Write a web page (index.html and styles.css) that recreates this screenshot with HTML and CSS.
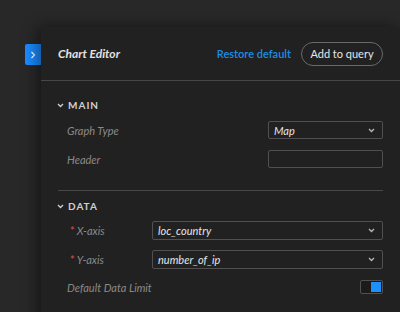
FILE: index.html
```html
<!DOCTYPE html>
<html>
<head>
<meta charset="utf-8">
<link rel="stylesheet" href="styles.css">
</head>
<body>
<div class="page">
  <div class="tab">
    <svg width="6" height="8" viewBox="0 0 6 8"><path d="M1.5 1 L4.5 4 L1.5 7" fill="none" stroke="#fff" stroke-width="1.2"/></svg>
  </div>
  <div class="panel">
    <div class="head">
      <div class="title">Chart Editor</div>
      <div class="restore">Restore default</div>
      <div class="add">Add to query</div>
    </div>
    <div class="body">
      <div class="sec sec-main">
        <div class="sec-head">
          <svg class="chev" width="7" height="5" viewBox="0 0 7 5"><path d="M1 1 L3.5 3.5 L6 1" fill="none" stroke="#cfcfcf" stroke-width="1.3"/></svg>
          <span>MAIN</span>
        </div>
        <div class="row row-main">
          <div class="label">Graph Type</div>
          <div class="select short"><span>Map</span><svg class="dd" width="7" height="5" viewBox="0 0 7 5"><path d="M1 1 L3.5 3.5 L6 1" fill="none" stroke="#b8b8b8" stroke-width="1.3"/></svg></div>
        </div>
        <div class="row row-main">
          <div class="label">Header</div>
          <div class="select short"></div>
        </div>
      </div>
      <div class="divider"></div>
      <div class="sec sec-data">
        <div class="sec-head">
          <svg class="chev" width="7" height="5" viewBox="0 0 7 5"><path d="M1 1 L3.5 3.5 L6 1" fill="none" stroke="#cfcfcf" stroke-width="1.3"/></svg>
          <span>DATA</span>
        </div>
        <div class="row row-data">
          <div class="label"><span class="req">*</span>X-axis</div>
          <div class="select long"><span>loc_country</span><svg class="dd" width="7" height="5" viewBox="0 0 7 5"><path d="M1 1 L3.5 3.5 L6 1" fill="none" stroke="#b8b8b8" stroke-width="1.3"/></svg></div>
        </div>
        <div class="row row-data">
          <div class="label"><span class="req">*</span>Y-axis</div>
          <div class="select long"><span>number_of_ip</span><svg class="dd" width="7" height="5" viewBox="0 0 7 5"><path d="M1 1 L3.5 3.5 L6 1" fill="none" stroke="#b8b8b8" stroke-width="1.3"/></svg></div>
        </div>
        <div class="row row-limit">
          <div class="label">Default Data Limit</div>
          <div class="toggle"><div class="knob"></div></div>
        </div>
      </div>
    </div>
  </div>
</div>
</body>
</html>
```
FILE: styles.css
```css
html, body {
  margin: 0;
  padding: 0;
  background: #282828;
  overflow: hidden;
  font-family: Lato, "Open Sans", sans-serif;
}
.page {
  display: flex;
  align-items: flex-start;
  padding: 27px 0 0 25px;
  height: 312px;
  box-sizing: border-box;
}
.tab {
  width: 16px;
  height: 21px;
  margin-top: 17px;
  background: #1a8cff;
  border-radius: 2px 0 0 2px;
  display: flex;
  align-items: center;
  justify-content: center;
  flex: none;
}
.panel {
  flex: 1;
  height: 300px;
  background: #212121;
  box-shadow: -4px 0 14px rgba(0,0,0,0.45);
}
.head {
  height: 53px;
  border-bottom: 1px solid #474747;
  display: flex;
  align-items: center;
  padding: 0 17px;
}
.title {
  font-style: italic;
  font-weight: 700;
  font-size: 12px;
  color: #e2e2e2;
  flex: 1;
}
.restore {
  font-size: 11px;
  font-weight: 600;
  color: #1a8ee6;
  margin-right: 10px;
}
.add {
  width: 80px;
  height: 22px;
  border: 1px solid #6a6a6a;
  border-radius: 12px;
  color: #e6e6e6;
  font-size: 11px;
  display: flex;
  align-items: center;
  justify-content: center;
}
.body {
  padding: 0 17px;
}
.sec-main { padding-top: 14px; }
.sec-data { padding-top: 5px; }
.sec-head {
  height: 20px;
  display: flex;
  align-items: center;
  color: #d0d0d0;
  font-size: 10px;
  font-weight: 700;
  letter-spacing: 1px;
}
.chev { margin-left: -1px; margin-right: 4px; }
.row {
  display: flex;
  align-items: center;
}
.label {
  font-style: italic;
  font-size: 11px;
  color: #8a8a8a;
}
.row-main { padding-left: 9px; margin-top: 11px; }
.sec-main .sec-head + .row { margin-top: 6px; }
.row-data { padding-left: 12px; margin-top: 10px; }
.sec-data .sec-head + .row { margin-top: 5px; }
.row-limit { padding-left: 9px; margin-top: 11px; }
.req { color: #e0484f; margin-right: 2px; font-style: normal; }
.select {
  margin-left: auto;
  box-sizing: border-box;
  border: 1px solid #505050;
  border-radius: 2px;
  display: flex;
  align-items: center;
  padding: 0 7px 0 5px;
  font-style: italic;
  font-size: 11px;
  color: #e6e6e6;
}
.select span { flex: 1; }
.short { width: 115px; height: 18px; }
.long { width: 231px; height: 19px; }
.toggle {
  margin-left: auto;
  width: 23px;
  height: 14px;
  box-sizing: border-box;
  border: 1px solid #505050;
  border-radius: 2px;
  background: #1b1b1b;
  display: flex;
  justify-content: flex-end;
  align-items: center;
  padding-right: 1px;
}
.knob {
  width: 10px;
  height: 10px;
  background: #1e8fff;
}
.divider {
  height: 1px;
  background: #474747;
  margin-top: 22px;
}
```
